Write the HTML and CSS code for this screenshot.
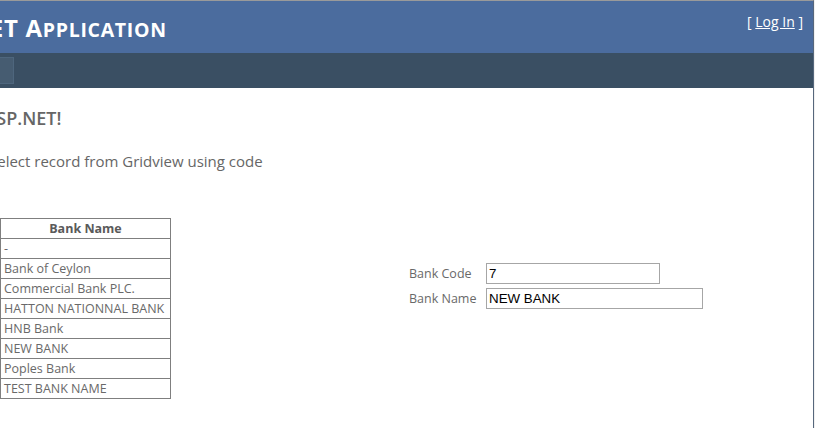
FILE: index.html
```html
<!DOCTYPE html>
<html>
<head>
<meta charset="utf-8">
<title>My ASP.NET Application</title>
<link rel="stylesheet" href="styles.css">
</head>
<body>
<div class="page">
  <div class="header">
    <div class="title"><h1>M<span class="sc">y</span> ASP.NET A<span class="sc">pplication</span></h1></div>
    <div class="loginDisplay">[ <a href="#" class="login-link">Log In</a> ]</div>
  </div>
  <div class="menubar">
    <div class="menu">
      <a href="#" class="menu-item">About</a>
    </div>
  </div>
  <div class="main">
    <h2 class="welcome">Welcome to ASP.NET!</h2>
    <p class="intro">Select record from Gridview using code</p>
    <div class="content-row">
      <table class="grid">
        <thead>
          <tr><th class="c1">Bank Code</th><th class="c2">Bank Name</th></tr>
        </thead>
        <tbody>
          <tr><td class="c1">0</td><td class="c2">-</td></tr>
          <tr><td class="c1">1</td><td class="c2">Bank of Ceylon</td></tr>
          <tr><td class="c1">2</td><td class="c2">Commercial Bank PLC.</td></tr>
          <tr><td class="c1">3</td><td class="c2">HATTON NATIONNAL BANK</td></tr>
          <tr><td class="c1">4</td><td class="c2">HNB Bank</td></tr>
          <tr><td class="c1">7</td><td class="c2">NEW BANK</td></tr>
          <tr><td class="c1">5</td><td class="c2">Poples Bank</td></tr>
          <tr><td class="c1">6</td><td class="c2">TEST BANK NAME</td></tr>
        </tbody>
      </table>
      <div class="form">
        <label class="form-label" for="code">Bank Code</label>
        <input class="field field-code" id="code" type="text" value="7">
        <label class="form-label" for="name">Bank Name</label>
        <input class="field field-name" id="name" type="text" value="NEW BANK">
      </div>
    </div>
  </div>
</div>
</body>
</html>
```
FILE: styles.css
```css
html, body {
  margin: 0;
  padding: 0;
}
body {
  background: #f0f0f0;
  font-family: "Open Sans", "Noto Sans", sans-serif;
  color: #696969;
  overflow: hidden;
  width: 815px;
  height: 428px;
}
.page {
  box-sizing: border-box;
  width: 962px;
  margin-left: -148px;
  background: #fff;
  border-top: 1px solid #9a9a9a;
  border-right: 1px solid #56677c;
  border-left: 1px solid #56677c;
  height: 440px;
}
.header {
  display: flex;
  justify-content: space-between;
  align-items: flex-start;
  height: 52px;
  background: #4b6c9e;
}
.title h1 {
  margin: 0;
  padding: 1px 0 0 19px;
  font-size: 24px;
  line-height: 51px;
  font-weight: 700;
  text-transform: uppercase;
  color: #fff;
  white-space: nowrap;
  letter-spacing: 0.7px;
}
.title .sc {
  font-size: 19.5px;
}
.loginDisplay {
  padding: 10px 10px 0 0;
  font-size: 14px;
  line-height: 21px;
  color: #fff;
}
.login-link {
  color: #fff;
  text-decoration: underline;
}
.menubar {
  height: 35px;
  background: #3a4f63;
}
.menu {
  display: flex;
  padding: 4px 0 0 81px;
}
.menu-item {
  box-sizing: border-box;
  display: block;
  width: 80px;
  height: 27px;
  background: #465c71;
  border: 1px solid #4e667d;
  color: #dde4ec;
  font-size: 13px;
  line-height: 25px;
  text-align: left;
  padding-left: 10px;
  text-decoration: none;
}
.main {
  padding: 18px 20px 0 20px;
}
.welcome {
  margin: 0 0 0 4px;
  font-size: 18px;
  line-height: 24px;
  font-weight: 600;
  color: #666;
  white-space: nowrap;
}
.intro {
  margin: 20px 0 0 116px;
  font-size: 15px;
  line-height: 22px;
  color: #666;
  white-space: nowrap;
}
.content-row {
  display: flex;
  align-items: flex-start;
  margin-top: 46px;
}
.grid {
  border-collapse: separate;
  border-spacing: 0;
  table-layout: fixed;
  border-top: 1px solid #7f7f7f;
  border-left: 1px solid #7f7f7f;
  font-size: 12.5px;
  color: #696969;
  flex: none;
}
.grid th, .grid td {
  border-right: 1px solid #7f7f7f;
  border-bottom: 1px solid #7f7f7f;
  padding: 0 3px;
  height: 19px;
  line-height: 19px;
  white-space: nowrap;
  overflow: hidden;
}
.grid th {
  font-weight: 700;
  color: #5a5a5a;
  text-align: center;
}
.grid td.c2 {
  text-align: left;
}
.grid .c1 {
  width: 120px;
  text-align: right;
}
.grid .c2 {
  width: 163px;
}
.form {
  display: grid;
  grid-template-columns: 77px auto;
  row-gap: 4px;
  align-items: center;
  margin-left: 238px;
  margin-top: 45px;
}
.form-label {
  font-size: 12.5px;
  color: #696969;
}
.field {
  box-sizing: border-box;
  height: 21px;
  border: 1px solid #a6a6a6;
  padding: 0 2px;
  font-family: "Liberation Sans", Arial, sans-serif;
  font-size: 13.33px;
  color: #000;
  background: #fff;
  outline: none;
}
.field-code {
  width: 174px;
}
.field-name {
  width: 217px;
}
```
